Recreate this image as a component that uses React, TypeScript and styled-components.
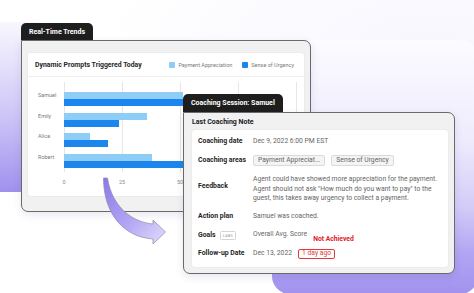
import React from 'react';
import styled, { createGlobalStyle } from 'styled-components';

type Person = { name: string; appreciation: number; urgency: number };

const people: Person[] = [
  { name: 'Samuel', appreciation: 51.5, urgency: 62 },
  { name: 'Emily', appreciation: 35.8, urgency: 23.7 },
  { name: 'Alice', appreciation: 11.2, urgency: 19 },
  { name: 'Robert', appreciation: 37.9, urgency: 58 },
];

// only the ticks that peek out from under the coaching window
const ticks = [0, 25, 50];
const TICK_PX = 58;
const PX_PER_UNIT = TICK_PX / 25;

const feedback = [
  'Agent could have showed more appreciation for the payment.',
  'Agent should not ask "How much do you want to pay" to the',
  'guest, this takes away urgency to collect a payment.',
];

const GlobalStyle = createGlobalStyle`
  html, body {
    margin: 0;
    padding: 0;
    background: #ffffff;
  }
  body {
    font-family: Roboto, "Liberation Sans", Arial, sans-serif;
  }
`;

const Stage = styled.div`
  position: relative;
  width: 474px;
  height: 293px;
  overflow: hidden;
  background: radial-gradient(ellipse at 90% 20%, #f7f6fe 0%, #ffffff 55%);
`;

const Blob = styled.div<{ $side: 'left' | 'right' }>`
  position: absolute;
  border-radius: 16px;
  ${(p) =>
    p.$side === 'left'
      ? `
    left: -30px;
    top: 22px;
    width: 80px;
    height: 170px;
    background: linear-gradient(180deg, #f8f7fe 0%, #e6e2fb 24%, #cbc2f7 58%, #a090ee 100%);
  `
      : `
    left: 272px;
    top: 40px;
    width: 206px;
    height: 254px;
    border-radius: 18px;
    background: linear-gradient(180deg, #fcfbff 0%, #eeebfd 40%, #d3cbf8 66%, #b2a5f3 84%, #a292ee 100%);
  `}
`;

const Window = styled.section<{ $left: number; $top: number; $width: number }>`
  position: absolute;
  left: ${(p) => p.$left}px;
  top: ${(p) => p.$top}px;
  width: ${(p) => p.$width}px;
  display: flex;
  flex-direction: column;
  align-items: flex-start;
`;

const Tab = styled.div<{ $height: number }>`
  height: ${(p) => p.$height}px;
  padding: 0 8px;
  display: flex;
  align-items: center;
  background: #1e1e1e;
  color: #ffffff;
  font-size: 7px;
  font-weight: 700;
  border-radius: 5px 5px 0 0;
  white-space: nowrap;
`;

const Frame = styled.div<{ $pad: string }>`
  align-self: stretch;
  box-sizing: border-box;
  padding: ${(p) => p.$pad};
  background: #f1f1f2;
  border: 1px solid #6a6a6a;
  border-radius: 0 7px 7px 7px;
  box-shadow: 0 3px 8px rgba(70, 60, 130, 0.12);
`;

const Card = styled.div`
  background: #ffffff;
  border-radius: 3px;
  box-shadow: 0 0 0 1px #ececec;
`;

const ChartHeader = styled.div`
  height: 24px;
  box-sizing: border-box;
  padding: 0 10px 0 7px;
  display: flex;
  align-items: center;
  justify-content: space-between;
  border-bottom: 1px solid #efefef;
`;

const ChartTitle = styled.h3`
  margin: 0;
  font-size: 6.9px;
  font-weight: 700;
  color: #262626;
`;

const Legend = styled.div`
  display: flex;
  gap: 10px;
`;

const LegendItem = styled.span`
  display: flex;
  align-items: center;
  gap: 3px;
  font-size: 5.5px;
  color: #7a7a7a;
`;

const Swatch = styled.i<{ $tone: 'light' | 'dark' }>`
  width: 6px;
  height: 6px;
  border-radius: 1px;
  background: ${(p) => (p.$tone === 'light' ? '#8ecdf6' : '#1c86ee')};
`;

const ChartBody = styled.div`
  display: grid;
  grid-template-columns: 26px 1fr;
  padding: 5px 0 9px 10px;
`;

const LabelCol = styled.div`
  display: flex;
  flex-direction: column;
  gap: 6.7px;
  padding-top: 10px;
`;

const RowLabel = styled.div`
  height: 14px;
  font-size: 5.5px;
  line-height: 7px;
  color: #7a7a7a;
`;

const Plot = styled.div`
  display: flex;
  flex-direction: column;
  gap: 6.7px;
  padding: 10px 0 4px;
  background-image: linear-gradient(to right, #e6e6e6 0, #e6e6e6 1px, transparent 1px);
  background-size: ${TICK_PX}px 100%;
`;

const BarGroup = styled.div`
  display: flex;
  flex-direction: column;
`;

const Bar = styled.div<{ $tone: 'light' | 'dark' }>`
  height: 7px;
  background: ${(p) => (p.$tone === 'light' ? '#8ecdf6' : '#1c86ee')};
`;

const Axis = styled.div`
  grid-column: 2;
  display: flex;
  height: 10px;
  margin-top: 5px;
  align-items: center;
`;

const Tick = styled.div`
  flex: 0 0 ${TICK_PX}px;
  font-size: 5.5px;
  color: #8a8a8a;

  span {
    display: inline-block;
    transform: translateX(-50%);
  }
`;

const NoteHeader = styled.div`
  height: 17px;
  display: flex;
  align-items: center;
  font-size: 7px;
  font-weight: 700;
  color: #222222;
`;

const NoteGrid = styled.div`
  display: grid;
  grid-template-columns: 55px 1fr;
  row-gap: 9px;
  padding: 7px 6px 8px 6px;
`;

const Label = styled.div<{ $lift?: boolean }>`
  display: flex;
  align-items: center;
  font-size: 6.9px;
  font-weight: 700;
  line-height: 9px;
  color: #1f1f1f;
  white-space: nowrap;
  ${(p) => (p.$lift ? 'padding-bottom: 6px;' : '')}
`;

const Value = styled.div<{ $top?: boolean }>`
  display: flex;
  align-items: ${(p) => (p.$top ? 'flex-start' : 'center')};
  gap: 6px;
  font-size: 6.75px;
  line-height: 9.3px;
  color: #666666;
  white-space: nowrap;
`;

const Lines = styled.div`
  display: flex;
  flex-direction: column;
`;

const Chip = styled.span`
  height: 11px;
  box-sizing: border-box;
  padding: 0 4px;
  display: inline-flex;
  align-items: center;
  background: #f4f4f4;
  border: 1px solid #dadada;
  border-radius: 2px;
  color: #666666;
`;

const Labs = styled.span`
  margin-left: 4px;
  padding: 1px 2px;
  font-size: 4px;
  line-height: 5px;
  font-weight: 400;
  letter-spacing: 0.2px;
  color: #9a9a9a;
  border: 1px solid #d4d4d4;
  border-radius: 1.5px;
`;

const Status = styled.span`
  margin-top: 5px;
  margin-bottom: -5px;
  font-weight: 700;
  color: #e0201f;
`;

const Ago = styled.span`
  height: 10px;
  box-sizing: border-box;
  padding: 0 3px;
  display: inline-flex;
  align-items: center;
  color: #e53935;
  border: 1px solid #e53935;
  border-radius: 2px;
`;

const ArrowArt = styled.svg`
  position: absolute;
  left: 95px;
  top: 170px;
  width: 80px;
  height: 80px;
  overflow: visible;
`;

function TrendsWindow() {
  return (
    <Window $left={21} $top={23} $width={290}>
      <Tab $height={17}>Real-Time Trends</Tab>
      <Frame $pad="12px 6px 15px 6px">
        <Card>
          <ChartHeader>
            <ChartTitle>Dynamic Prompts Triggered Today</ChartTitle>
            <Legend>
              <LegendItem>
                <Swatch $tone="light" />
                Payment Appreciation
              </LegendItem>
              <LegendItem>
                <Swatch $tone="dark" />
                Sense of Urgency
              </LegendItem>
            </Legend>
          </ChartHeader>
          <ChartBody>
            <LabelCol>
              {people.map((p) => (
                <RowLabel key={p.name}>{p.name}</RowLabel>
              ))}
            </LabelCol>
            <Plot>
              {people.map((p) => (
                <BarGroup key={p.name}>
                  <Bar $tone="light" style={{ width: p.appreciation * PX_PER_UNIT }} />
                  <Bar $tone="dark" style={{ width: p.urgency * PX_PER_UNIT }} />
                </BarGroup>
              ))}
            </Plot>
            <Axis>
              {ticks.map((t) => (
                <Tick key={t}>
                  <span>{t}</span>
                </Tick>
              ))}
            </Axis>
          </ChartBody>
        </Card>
      </Frame>
    </Window>
  );
}

function CurvedArrow() {
  return (
    <ArrowArt viewBox="0 0 80 80">
      <defs>
        <linearGradient id="arrowFill" x1="0" y1="0" x2="1" y2="1">
          <stop offset="0" stopColor="#8a78ea" />
          <stop offset="0.55" stopColor="#b3a7f4" />
          <stop offset="1" stopColor="#e2ddfb" />
        </linearGradient>
      </defs>
      <path
        d="M 8.5 8 C 8.5 43, 28 67, 58 69 L 58 74 L 70.5 62 L 58 50 L 58 54 C 37 52, 17 37, 12.5 8 Z"
        fill="url(#arrowFill)"
        stroke="#8d8aa3"
        strokeWidth="0.7"
        strokeLinejoin="round"
      />
    </ArrowArt>
  );
}

function CoachingWindow() {
  return (
    <Window $left={183} $top={94} $width={272}>
      <Tab $height={18}>Coaching Session: Samuel</Tab>
      <Frame $pad="0 6px 6px 8px">
        <NoteHeader>Last Coaching Note</NoteHeader>
        <Card>
          <NoteGrid>
            <Label>Coaching date</Label>
            <Value>Dec 9, 2022 6:00 PM EST</Value>

            <Label>Coaching areas</Label>
            <Value>
              <Chip>Payment Appreciat...</Chip>
              <Chip>Sense of Urgency</Chip>
            </Value>

            <Label $lift>Feedback</Label>
            <Value>
              <Lines>
                {feedback.map((line) => (
                  <span key={line}>{line}</span>
                ))}
              </Lines>
            </Value>

            <Label>Action plan</Label>
            <Value>Samuel was coached.</Value>

            <Label>
              Goals <Labs>LABS</Labs>
            </Label>
            <Value $top>
              Overall Avg. Score
              <Status>Not Achieved</Status>
            </Value>

            <Label>Follow-up Date</Label>
            <Value>
              Dec 13, 2022
              <Ago>1 day ago</Ago>
            </Value>
          </NoteGrid>
        </Card>
      </Frame>
    </Window>
  );
}

export default function App() {
  return (
    <>
      <GlobalStyle />
      <Stage>
        <Blob $side="left" />
        <Blob $side="right" />
        <TrendsWindow />
        <CurvedArrow />
        <CoachingWindow />
      </Stage>
    </>
  );
}
